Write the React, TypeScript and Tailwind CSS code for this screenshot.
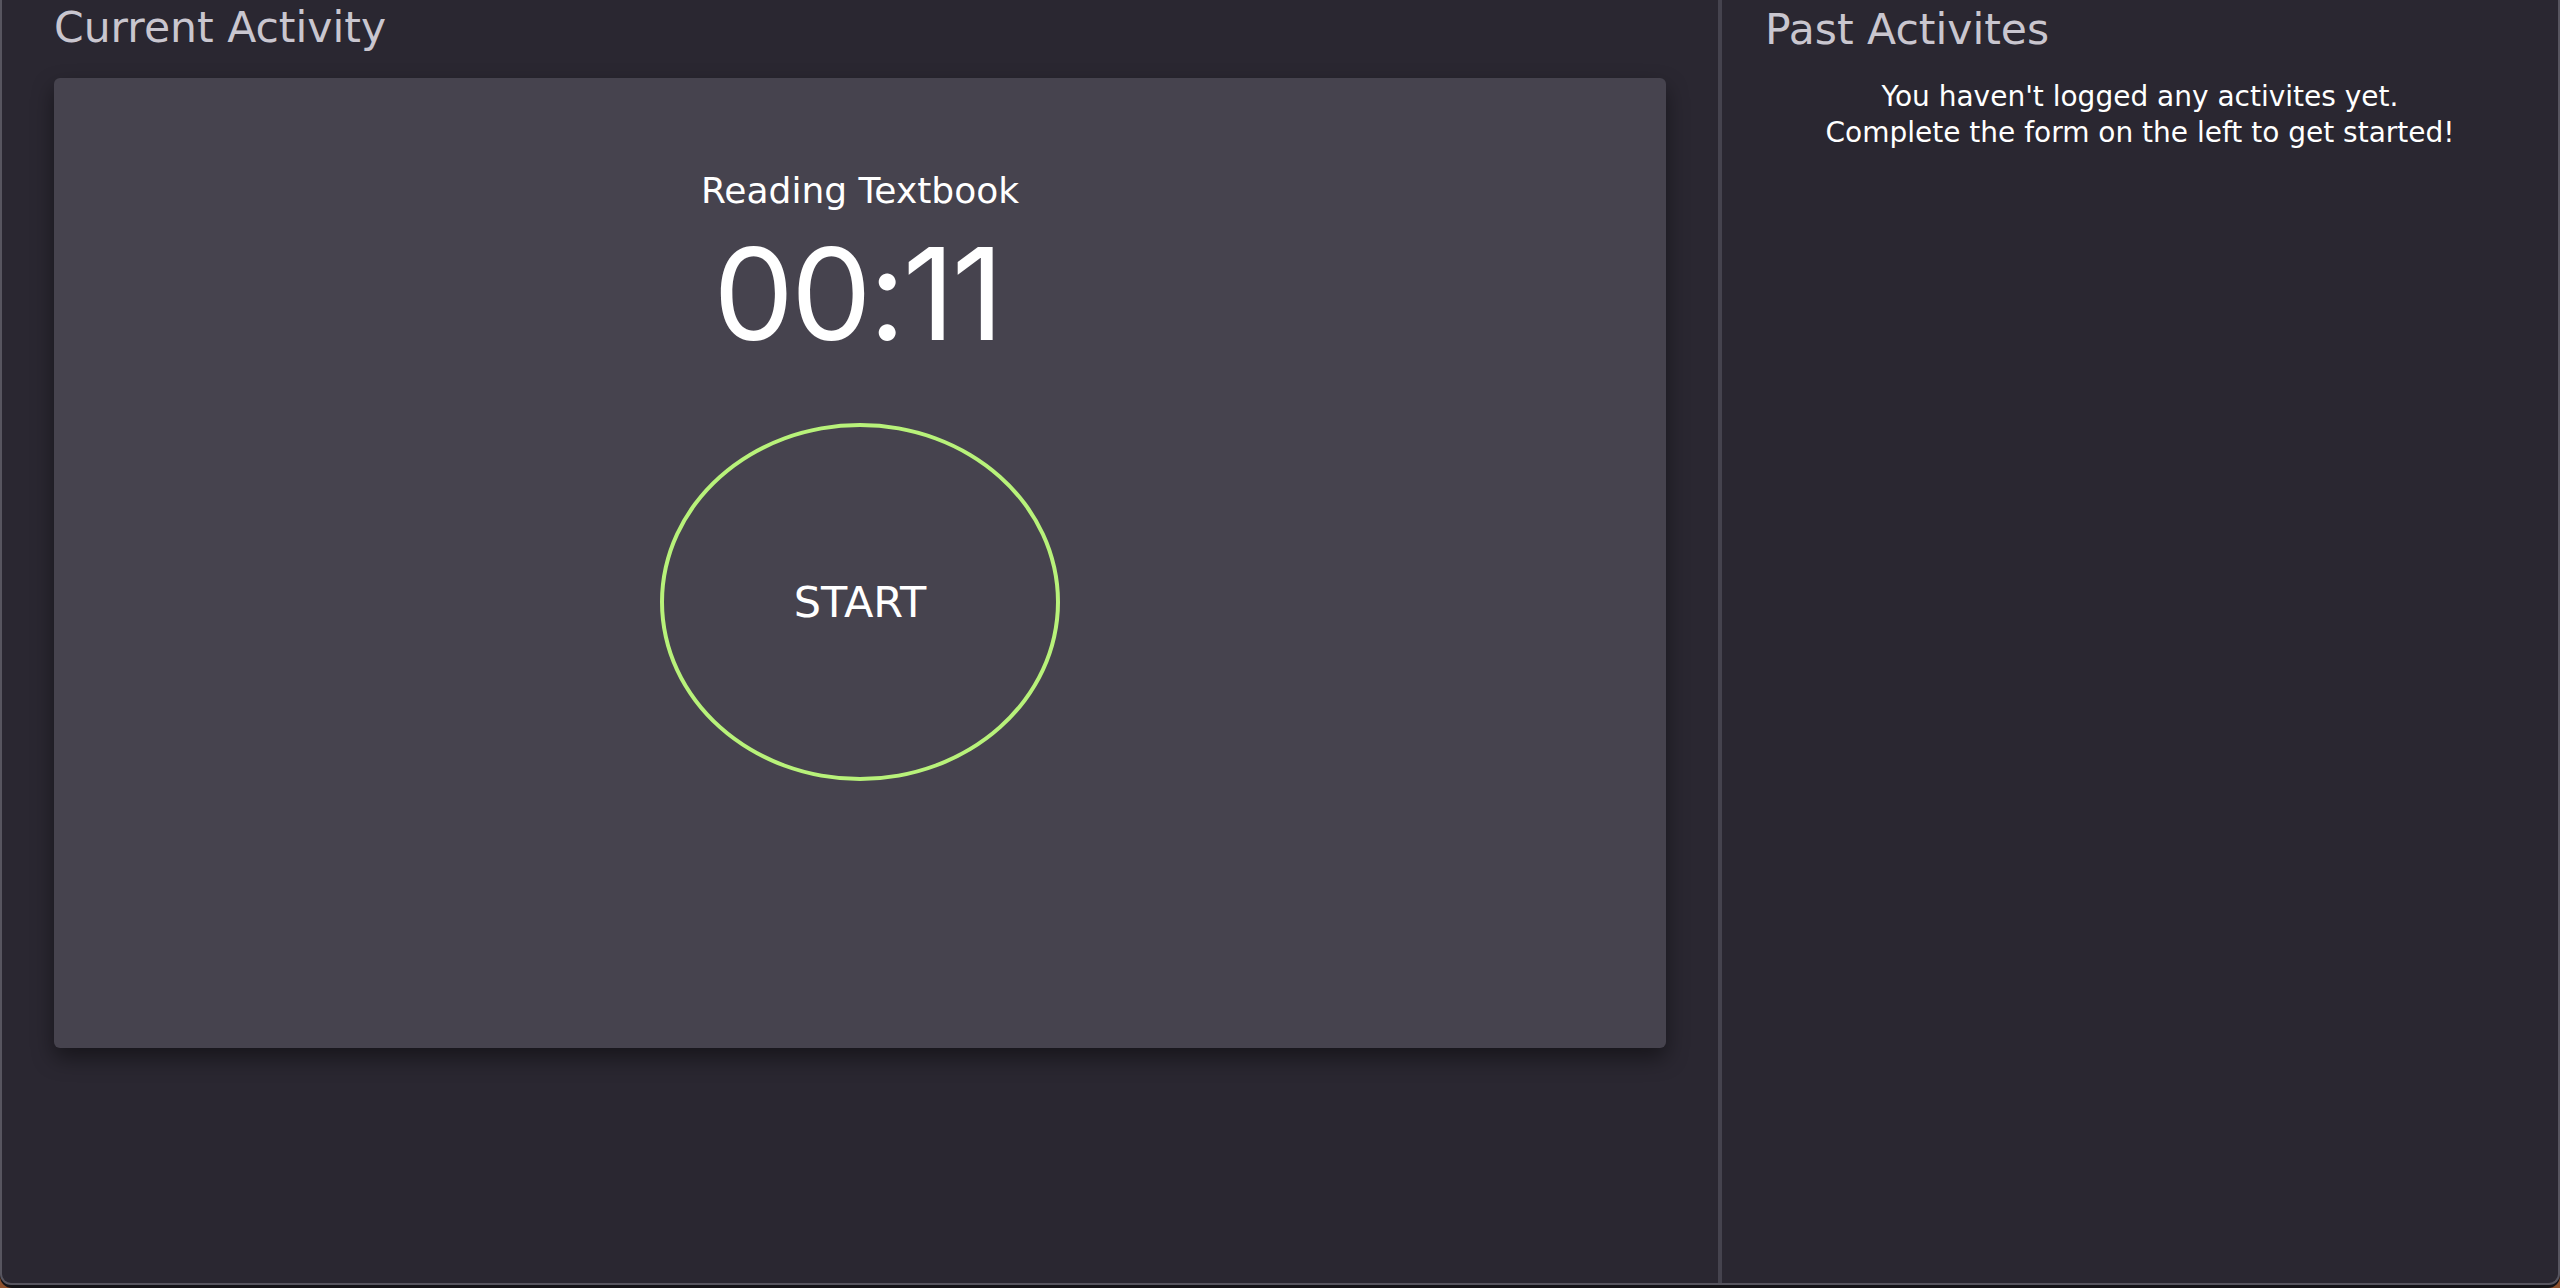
import React from "react";

const sans = "font-['DejaVu_Sans',sans-serif]";

function CurrentActivity() {
  return (
    <section className="w-[1716px] shrink-0 pl-[52px] pr-[52px] pt-[2px]">
      <h2 className={`${sans} text-[42.5px] leading-[52px] text-[#c9c6cf]`}>
        Current Activity
      </h2>

      {/* Timer card */}
      <div className="mt-[24px] h-[970px] rounded-[6px] bg-[#46434e] shadow-[0_10px_22px_rgba(0,0,0,0.45)] flex flex-col items-center pt-[91px]">
        <p className={`${sans} text-[36px] leading-[44px] text-white`}>
          Reading Textbook
        </p>
        <p className="mt-[17px] mr-[6px] font-['Inter',sans-serif] proportional-nums text-[128px] leading-none text-white tracking-[-3px]">
          00:11
        </p>
        <button
          className={`${sans} mt-[65px] w-[400px] h-[358px] rounded-[50%] border-[4px] border-[#b8f27a] text-[43px] text-white flex items-center justify-center`}
        >
          START
        </button>
      </div>
    </section>
  );
}

function PastActivities() {
  return (
    <section className="flex-1 pl-[43px] pt-[4px]">
      <h2 className={`${sans} text-[42.5px] leading-[52px] text-[#c9c6cf]`}>
        Past Activites
      </h2>
      <div className={`${sans} mt-[23px] pr-[43px] text-center text-[28px] leading-[36px] text-white`}>
        <p>You haven't logged any activites yet.</p>
        <p>Complete the form on the left to get started!</p>
      </div>
    </section>
  );
}

export default function App() {
  return (
    <div className="w-[2560px] h-[1288px] bg-[#8c4f2b] overflow-hidden">
      <div className="h-[1288px] rounded-b-[12px] bg-[#131216] pb-[3px]">
        <div className="h-full rounded-b-[11px] border-x-2 border-b-2 border-[#57555f] bg-[#2a2731] flex">
          <CurrentActivity />
          <div className="w-[4px] shrink-0 bg-[#45434e]" />
          <PastActivities />
        </div>
      </div>
    </div>
  );
}
